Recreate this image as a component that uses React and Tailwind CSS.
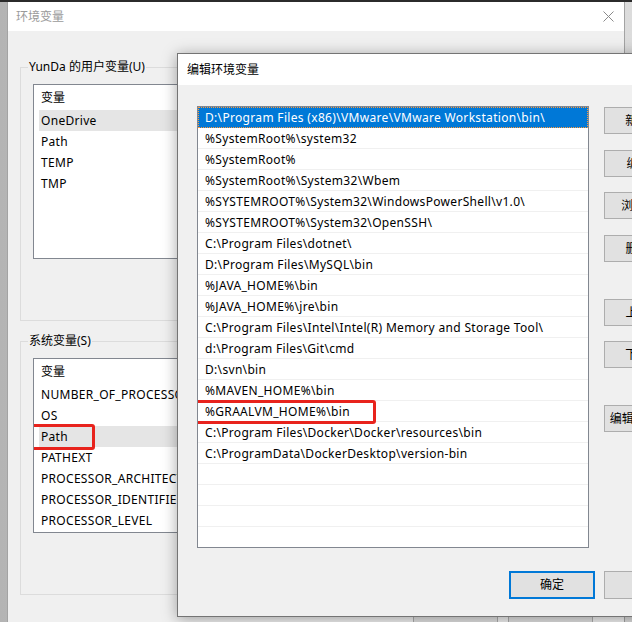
import React from "react";

const FONT = { fontFamily: '"Noto Sans", "Noto Sans CJK SC", sans-serif' };

const paths = [
  "D:\\Program Files (x86)\\VMware\\VMware Workstation\\bin\\",
  "%SystemRoot%\\system32",
  "%SystemRoot%",
  "%SystemRoot%\\System32\\Wbem",
  "%SYSTEMROOT%\\System32\\WindowsPowerShell\\v1.0\\",
  "%SYSTEMROOT%\\System32\\OpenSSH\\",
  "C:\\Program Files\\dotnet\\",
  "D:\\Program Files\\MySQL\\bin",
  "%JAVA_HOME%\\bin",
  "%JAVA_HOME%\\jre\\bin",
  "C:\\Program Files\\Intel\\Intel(R) Memory and Storage Tool\\",
  "d:\\Program Files\\Git\\cmd",
  "D:\\svn\\bin",
  "%MAVEN_HOME%\\bin",
  "%GRAALVM_HOME%\\bin",
  "C:\\Program Files\\Docker\\Docker\\resources\\bin",
  "C:\\ProgramData\\DockerDesktop\\version-bin",
  "",
  "",
  "",
  "",
];

function WinButton({ children, className = "" }) {
  return (
    <div
      className={
        "flex h-[27px] w-[83px] shrink-0 items-center justify-center whitespace-nowrap border border-[#adadad] bg-[#e1e1e1] text-[12px] leading-[16px] text-black " +
        className
      }
    >
      {children}
    </div>
  );
}

function VarList({ rows, highlight, redBox }) {
  return (
    <div className="mx-[12px] h-[175px] overflow-hidden border border-[#828790] bg-white">
      <div className="flex h-[24px] items-center pl-[7px] pt-[1px] text-[12px] leading-[16px] text-black">
        变量
      </div>
      <div className="pt-[1px]">
        {rows.map((r) => (
          <div
            key={r}
            className={
              "relative ml-[5px] flex h-[21px] items-center whitespace-nowrap pl-[2px] pt-[1px] text-[12px] leading-[16px] tracking-[0.3px] text-black " +
              (r === highlight ? "bg-[#e5e5e5]" : "")
            }
          >
            {r}
            {r === redBox && (
              <div className="absolute left-[-10px] top-[-2px] h-[26px] w-[66px] rounded-[3px] border-[3px] border-[#e8231d]" />
            )}
          </div>
        ))}
      </div>
    </div>
  );
}

function GroupBox({ label, children, className = "" }) {
  return (
    <fieldset
      className={
        "mx-[12px] border border-[#dcdcdc] px-0 pb-[61px] pt-[9px] " + className
      }
    >
      <legend className="ml-[7px] px-[1px] text-[12px] leading-[16px] text-black">
        {label}
      </legend>
      {children}
    </fieldset>
  );
}

export default function App() {
  return (
    <div
      className="relative h-[622px] w-[632px] overflow-hidden bg-gradient-to-r from-[#b4b4b4] to-[#dcdcdc]"
      style={FONT}
    >
      {/* top dark strip */}
      <div className="h-[2px] w-full bg-[#2b2b2b]" />

      {/* Outer window: 环境变量 */}
      <div className="absolute left-[7px] top-[2px] flex h-[660px] w-[618px] flex-col border-x border-[#a3a3a3] bg-[#f0f0f0]">
        <div className="flex h-[29px] shrink-0 items-center justify-between bg-white pl-[8px] pr-[10px]">
          <span className="text-[12px] leading-[16px] text-[#9a9a9a]">环境变量</span>
          <svg width="11" height="11" viewBox="0 0 11 11">
            <path d="M0.5 0.5 L10.5 10.5 M10.5 0.5 L0.5 10.5" stroke="#8a8a8a" strokeWidth="1" />
          </svg>
        </div>

        <GroupBox label="YunDa 的用户变量(U)" className="mt-[28px]">
          <VarList rows={["OneDrive", "Path", "TEMP", "TMP"]} highlight="OneDrive" />
        </GroupBox>

        <GroupBox label="系统变量(S)" className="mt-[12px]">
          <VarList
            rows={[
              "NUMBER_OF_PROCESSORS",
              "OS",
              "Path",
              "PATHEXT",
              "PROCESSOR_ARCHITECTURE",
              "PROCESSOR_IDENTIFIER",
              "PROCESSOR_LEVEL",
            ]}
            highlight="Path"
            redBox="Path"
          />
        </GroupBox>

        <div className="mt-[20px] flex justify-end gap-[10px] pr-[31px]">
          <div className="h-[28px] w-[85px] border border-[#adadad] bg-[#e1e1e1]" />
          <div className="h-[28px] w-[85px] border border-[#adadad] bg-[#e1e1e1]" />
        </div>
      </div>

      {/* Inner window: 编辑环境变量 */}
      <div className="absolute left-[177px] top-[53px] flex h-[564px] w-[532px] flex-col border border-[#747474] bg-[#f0f0f0] shadow-[0_2px_14px_rgba(0,0,0,0.35)]">
        <div className="flex h-[31px] shrink-0 items-center bg-white pl-[9px] text-[12px] leading-[16px] text-black">
          编辑环境变量
        </div>

        <div className="flex pl-[19px] pt-[21px]">
          <div className="h-[442px] w-[392px] shrink-0 overflow-hidden border border-[#828790] bg-white">
            {paths.map((p, i) =>
              i === 0 ? (
                <div
                  key={i}
                  className="flex h-[21px] items-center whitespace-nowrap border border-dotted border-[#ff9a3c] bg-[#0078d7] pl-[6px] pt-[1px] text-[12px] leading-[16px] tracking-[0.32px] text-white"
                >
                  {p}
                </div>
              ) : (
                <div
                  key={i}
                  className="relative flex h-[21px] items-center whitespace-nowrap border-b border-[#f0f0f0] pl-[7px] pt-[1px] text-[12px] leading-[16px] tracking-[0.32px] text-black"
                >
                  {p}
                  {p === "%GRAALVM_HOME%\\bin" && (
                    <div className="absolute left-[-3px] top-[-1px] h-[24px] w-[181px] rounded-[3px] border-[3px] border-[#e8231d]" />
                  )}
                </div>
              )
            )}
          </div>

          <div className="ml-[15px] flex flex-col">
            <WinButton className="mt-[1px]">新建(N)</WinButton>
            <WinButton className="mt-[16px]">编辑(E)</WinButton>
            <WinButton className="mt-[15px]">浏览(B)...</WinButton>
            <WinButton className="mt-[16px]">删除(D)</WinButton>
            <WinButton className="mt-[37px]">上移(U)</WinButton>
            <WinButton className="mt-[15px]">下移(O)</WinButton>
            <WinButton className="mt-[37px]">编辑文本(T)...</WinButton>
          </div>
        </div>

        <div className="mt-[23px] flex gap-[9px] pl-[331px]">
          <div className="flex h-[28px] w-[86px] items-center justify-center border-2 border-[#0078d7] bg-[#e1e1e1] text-[12px] leading-[16px] text-black">
            确定
          </div>
          <div className="flex h-[28px] w-[86px] items-center justify-center border border-[#adadad] bg-[#e1e1e1] text-[12px] leading-[16px] text-black">
            取消
          </div>
        </div>
      </div>
    </div>
  );
}
